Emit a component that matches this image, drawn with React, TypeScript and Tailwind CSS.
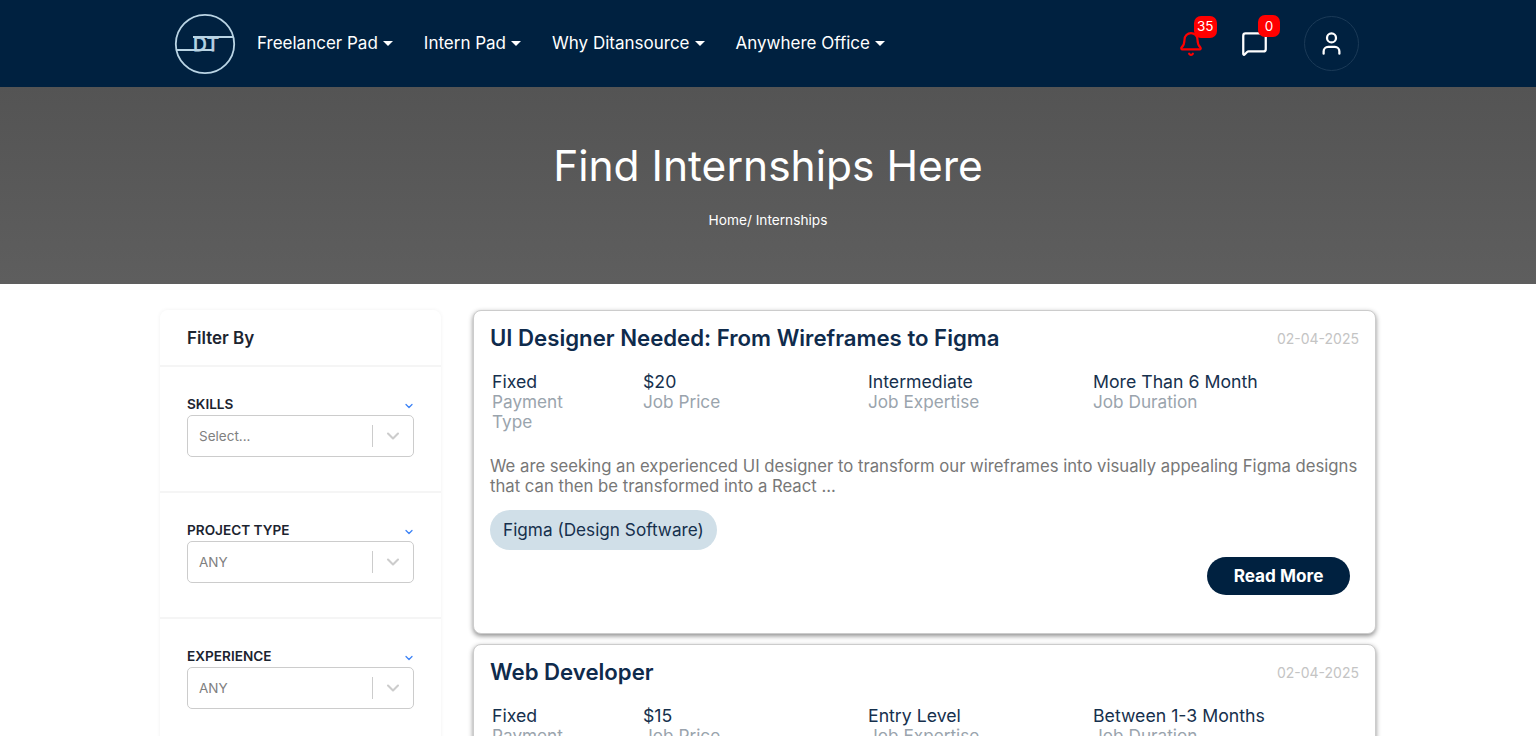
import React from 'react';
import { Bell, ChevronDown, MessageSquare, User } from 'lucide-react';

const navItems = ['Freelancer Pad', 'Intern Pad', 'Why Ditansource', 'Anywhere Office'];

const filters = [
  { label: 'SKILLS', value: 'Select...' },
  { label: 'PROJECT TYPE', value: 'ANY' },
  { label: 'EXPERIENCE', value: 'ANY' },
];

const jobs = [
  {
    title: 'UI Designer Needed: From Wireframes to Figma',
    date: '02-04-2025',
    price: '$20',
    expertise: 'Intermediate',
    duration: 'More Than 6 Month',
    description:
      'We are seeking an experienced UI designer to transform our wireframes into visually appealing Figma designs that can then be transformed into a React ...',
    tag: 'Figma (Design Software)',
  },
  {
    title: 'Web Developer',
    date: '02-04-2025',
    price: '$15',
    expertise: 'Entry Level',
    duration: 'Between 1-3 Months',
    description: '',
    tag: '',
  },
];

const Logo = () => (
  <svg width="62" height="62" viewBox="0 0 62 62" fill="none" stroke="#b9d4e4" strokeWidth="1.8">
    <circle cx="31" cy="31" r="29.2" />
    <path d="M2 37H39M19 24H59" />
    <text
      x="19"
      y="37.5"
      fill="#b9d4e4"
      stroke="#b9d4e4"
      strokeWidth="0.8"
      fontSize="19"
      letterSpacing="0.5"
      fontFamily="Inter, sans-serif"
    >
      DT
    </text>
  </svg>
);

const Caret = () => (
  <span className="ml-[5px] inline-block border-x-[5px] border-t-[5px] border-x-transparent border-t-white" />
);

const Badge = ({ children, className }: { children: React.ReactNode; className: string }) => (
  <span
    className={`absolute -top-[15px] flex h-[22px] min-w-[22px] items-center justify-center rounded-[7px] bg-[#ff0000] px-[3px] text-[13.5px] text-white ${className}`}
  >
    {children}
  </span>
);

const Header = () => (
  <header className="flex h-[87px] items-center bg-[#002140] pl-[174px] pr-[177px]">
    <Logo />
    <nav className="ml-[21px] flex gap-[31px] text-[17px] text-white">
      {navItems.map((item) => (
        <a key={item} className="flex items-center">
          {item}
          <Caret />
        </a>
      ))}
    </nav>
    <div className="ml-auto flex items-center">
      <div className="relative">
        <Bell size={26} color="#ff0000" strokeWidth={2} />
        <Badge className="left-[16px]">35</Badge>
      </div>
      <div className="relative ml-[37px]">
        <MessageSquare size={27} color="#ffffff" strokeWidth={2} />
        <Badge className="left-[17px]">0</Badge>
      </div>
      <div className="ml-[36px] flex h-[55px] w-[55px] items-center justify-center rounded-full border border-[#1b3a57]">
        <User size={27} color="#ffffff" strokeWidth={2} />
      </div>
    </div>
  </header>
);

const Banner = () => (
  <section className="flex h-[197px] flex-col items-center bg-[#5a5a5a] bg-linear-to-b from-[#545454] to-[#5e5e5e] text-white">
    <h1 className="mt-[50px] text-[42.5px] leading-[58px]">Find Internships Here</h1>
    <p className="mt-[15px] text-[13.7px] leading-[20px]">Home/ Internships</p>
  </section>
);

const Sidebar = () => (
  <aside className="w-[281px] shrink-0 rounded-lg bg-white shadow-[0_0_4px_rgba(0,0,0,0.06)]">
    <h2 className="flex h-[57px] items-center border-b-2 border-[#f5f5f5] pl-[27px] pt-[2px] text-[17px] font-semibold text-[#1c2430]">
      Filter By
    </h2>
    {filters.map((filter) => (
      <div key={filter.label} className="h-[126px] border-b-2 border-[#f5f5f5] px-[27px] pt-[27px]">
        <div className="mb-px flex items-center justify-between">
          <span className="text-[13.6px] leading-[20px] font-semibold text-[#1c2430]">{filter.label}</span>
          <ChevronDown className="translate-x-px translate-y-[2px]" size={12} color="#3b82f6" strokeWidth={2.5} />
        </div>
        <div className="flex h-[42px] items-center rounded-[5px] border border-[#cccccc] pl-[11px] text-[13.5px] text-[#808080]">
          <span className="flex-1">{filter.value}</span>
          <span className="h-[22px] w-px bg-[#cccccc]" />
          <ChevronDown className="mx-[10px]" size={20} color="#cccccc" strokeWidth={2.5} />
        </div>
      </div>
    ))}
  </aside>
);

const Meta = ({ value, label, width }: { value: string; label: string; width: string }) => (
  <div className={`${width} leading-[20px]`}>
    <div className="text-[17.7px] text-[#16304d]">{value}</div>
    <div className="text-[17.2px] text-[#9aa4ad]">{label}</div>
  </div>
);

const JobCard = ({ job }: { job: (typeof jobs)[number] }) => (
  <article className="h-[324px] shrink-0 rounded-lg border border-[#cccccc] bg-white px-4 shadow-[0_2px_5px_rgba(0,0,0,0.45)]">
    <div className="flex items-center justify-between pt-[12px]">
      <h3 className="text-[22.2px] leading-[30px] font-semibold text-[#0f2b4c]">{job.title}</h3>
      <span className="text-[14px] text-[#c4c4c4]">{job.date}</span>
    </div>
    <div className="mt-[19px] flex pl-[2px]">
      <div className="w-[151px] pr-[60px]">
        <Meta width="w-full" value="Fixed" label="Payment Type" />
      </div>
      <Meta width="w-[225px]" value={job.price} label="Job Price" />
      <Meta width="w-[225px]" value={job.expertise} label="Job Expertise" />
      <Meta width="w-[250px]" value={job.duration} label="Job Duration" />
    </div>
    {job.description && (
      <p className="mt-[24px] text-[16.7px] leading-[20px] text-[#777777]">{job.description}</p>
    )}
    {job.tag && (
      <span className="mt-[14px] inline-flex h-[40px] items-center rounded-full bg-[#d0dfe8] px-[13px] text-[17.2px] text-[#16304d]">
        {job.tag}
      </span>
    )}
    {job.tag && (
      <div className="mt-[7px] flex justify-end pr-[9px]">
        <button className="h-[38px] w-[143px] rounded-full bg-[#002140] text-[17.2px] font-bold text-white">
          Read More
        </button>
      </div>
    )}
  </article>
);

export default function App() {
  return (
    <div className="h-[736px] overflow-hidden bg-white font-['Inter',sans-serif]">
      <Header />
      <Banner />
      <main className="mx-auto flex w-[1216px] gap-[32px] pt-[26px]">
        <Sidebar />
        <div className="flex w-[903px] flex-col gap-[10px]">
          {jobs.map((job) => (
            <JobCard key={job.title} job={job} />
          ))}
        </div>
      </main>
    </div>
  );
}
